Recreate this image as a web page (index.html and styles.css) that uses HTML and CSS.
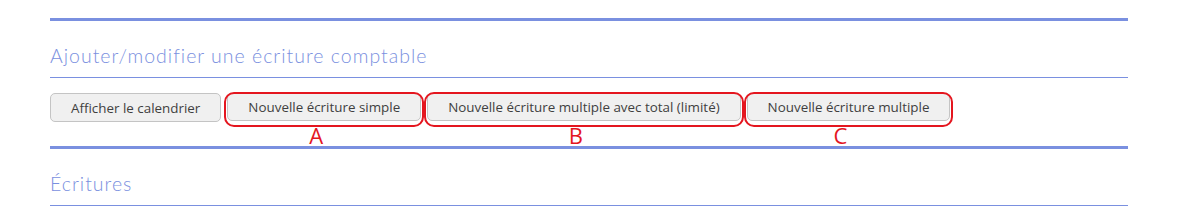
FILE: index.html
```html
<!DOCTYPE html>
<html lang="fr">
<head>
    <meta charset="UTF-8">
    <title>Écritures comptables</title>
    <link rel="stylesheet" href="styles.css">
</head>
<body>
    <div class="page">
        <div class="section">
            <h2 class="section-title">Ajouter/modifier une écriture comptable</h2>
            <div class="actions">
                <div class="action">
                    <button class="btn">Afficher le calendrier</button>
                </div>
                <div class="action marked">
                    <button class="btn">Nouvelle écriture simple</button>
                    <span class="mark-label">A</span>
                </div>
                <div class="action marked">
                    <button class="btn">Nouvelle écriture multiple avec total (limité)</button>
                    <span class="mark-label">B</span>
                </div>
                <div class="action marked">
                    <button class="btn">Nouvelle écriture multiple</button>
                    <span class="mark-label">C</span>
                </div>
            </div>
        </div>
        <div class="section">
            <h2 class="section-title">Écritures</h2>
        </div>
    </div>
</body>
</html>
```

FILE: styles.css
```css
body {
    margin: 0;
    padding: 0;
    background-color: #ffffff;
    font-family: "Open Sans", Arial, sans-serif;
}
.page {
    padding: 18px 50px 0 50px;
    width: 1078px;
}
.section {
    border-top: 3px solid #7a90e0;
}
.section-title {
    margin: 0;
    padding: 24px 0 10px 0;
    font-family: Lato, "Open Sans", sans-serif;
    font-weight: 300;
    font-size: 19.5px;
    letter-spacing: 1px;
    line-height: 22px;
    color: #7a90e0;
    border-bottom: 1px solid #7a90e0;
}
.actions {
    display: flex;
    gap: 6px;
    padding-top: 15px;
    height: 53px;
    box-sizing: content-box;
}
.action {
    display: flex;
    flex-direction: column;
    align-items: center;
}
.btn {
    height: 29px;
    padding: 0 20px;
    font-family: "Open Sans", Arial, sans-serif;
    font-size: 13.4px;
    color: #3f3f3f;
    background-color: #f0f0f0;
    border: 1px solid #c4c4c4;
    border-radius: 5px;
    cursor: pointer;
}
.marked {
    position: relative;
}
.marked::after {
    content: "";
    position: absolute;
    left: -3px;
    right: -3px;
    top: -1px;
    height: 31px;
    border: 2px solid #e4161f;
    border-radius: 10px;
}
.mark-label {
    font-family: "Open Sans", Arial, sans-serif;
    font-size: 22px;
    line-height: 22px;
    margin-top: 3px;
    margin-right: 16px;
    color: #e4161f;
}
```
